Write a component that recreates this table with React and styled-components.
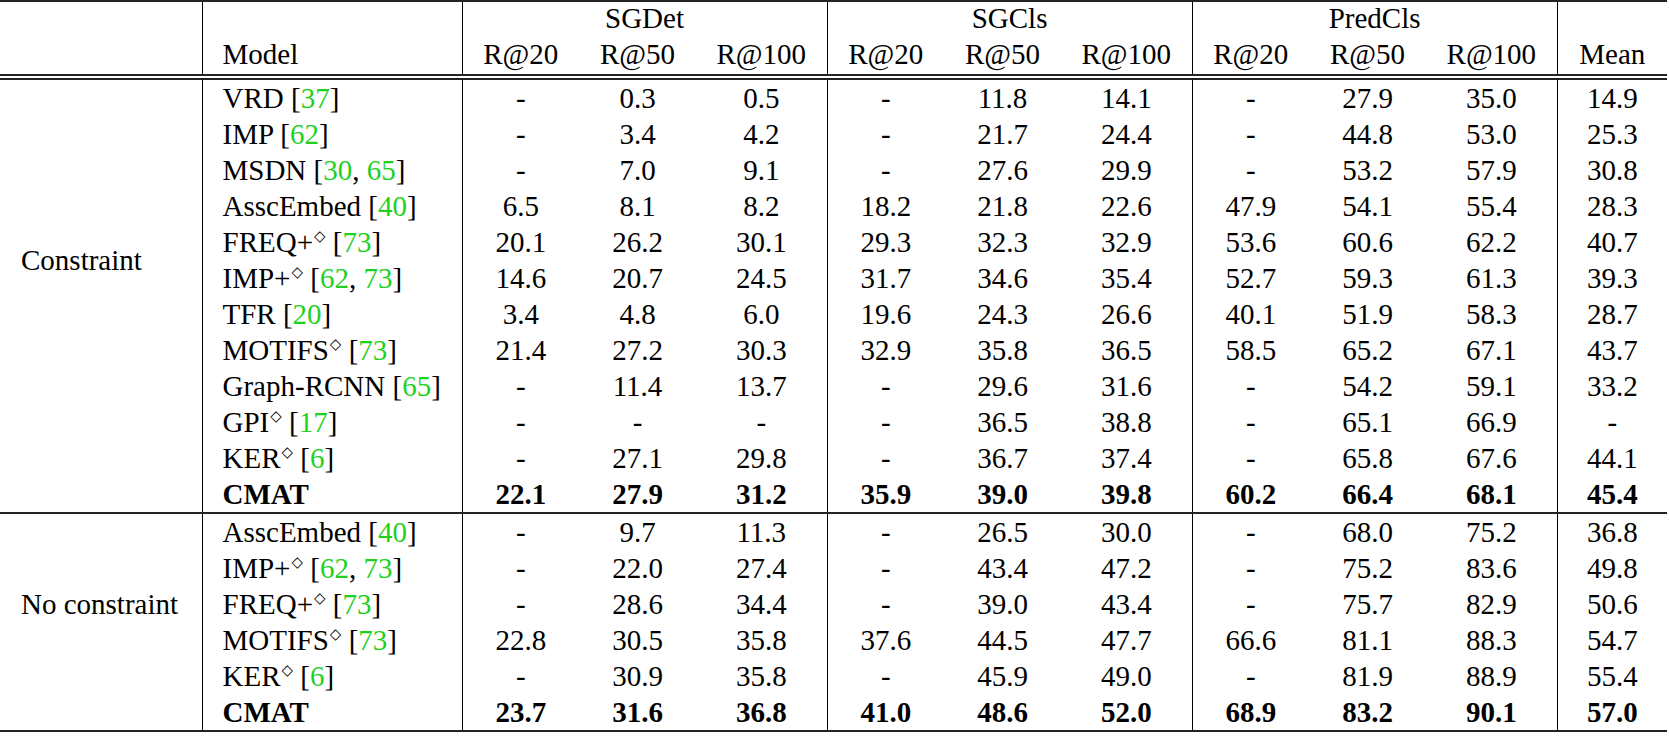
import React from 'react';
import styled, { createGlobalStyle } from 'styled-components';

const GlobalStyle = createGlobalStyle`
  body {
    margin: 0;
    background: #fff;
  }
`;

const Table = styled.table`
  border-collapse: collapse;
  table-layout: fixed;
  width: 1667px;
  font-family: "Liberation Serif", "Times New Roman", serif;
  font-size: 29px;
  color: #000;
  border-top: 2px solid #222;
  border-bottom: 2px solid #222;
`;

const Col = styled.col`
  width: ${p => p.$w}px;
`;

const HeadCell = styled.th`
  font-weight: normal;
  height: 36px;
  box-sizing: border-box;
  line-height: 32px;
  padding: 0 0 4px ${p => (p.$left ? '20px' : '0')};
  text-align: ${p => (p.$left ? 'left' : 'center')};
  white-space: nowrap;
  border-right: ${p => (p.$divider ? '1px solid #000' : 'none')};
  border-bottom: ${p => (p.$ruled ? '2px solid #222' : 'none')};
`;

const GapRow = styled.tr`
  height: 4px;

  td {
    padding: 0;
    border: none;
  }
`;

const BodyRow = styled.tr`
  height: 36px;
  font-weight: ${p => (p.$bold ? 'bold' : 'normal')};

  td {
    border-top: ${p => (p.$ruled ? '2px solid #222' : 'none')};
  }
`;

const GroupLabel = styled.td`
  padding: 0 0 0 21px;
  text-align: left;
  vertical-align: middle;
  white-space: nowrap;
  font-weight: normal;
  border-right: 1px solid #000;
`;

const ModelCell = styled.td`
  padding: 0 0 0 20px;
  line-height: 36px;
  text-align: left;
  white-space: nowrap;
  border-right: 1px solid #000;
`;

const NumCell = styled.td`
  padding: 0;
  line-height: 36px;
  text-align: center;
  white-space: nowrap;
  border-right: ${p => (p.$divider ? '1px solid #000' : 'none')};
`;

const Cite = styled.span`
  color: #1fd11f;
  font-weight: normal;
`;

const Diamond = styled.span`
  font-family: "DejaVu Sans", sans-serif;
  font-size: 15px;
  line-height: 1;
  vertical-align: 11px;
  margin-left: 1px;
`;

const constrained = [
  { name: 'VRD', cites: ['37'], v: ['-', '0.3', '0.5', '-', '11.8', '14.1', '-', '27.9', '35.0', '14.9'] },
  { name: 'IMP', cites: ['62'], v: ['-', '3.4', '4.2', '-', '21.7', '24.4', '-', '44.8', '53.0', '25.3'] },
  { name: 'MSDN', cites: ['30', '65'], v: ['-', '7.0', '9.1', '-', '27.6', '29.9', '-', '53.2', '57.9', '30.8'] },
  { name: 'AsscEmbed', cites: ['40'], v: ['6.5', '8.1', '8.2', '18.2', '21.8', '22.6', '47.9', '54.1', '55.4', '28.3'] },
  { name: 'FREQ+', sup: true, cites: ['73'], v: ['20.1', '26.2', '30.1', '29.3', '32.3', '32.9', '53.6', '60.6', '62.2', '40.7'] },
  { name: 'IMP+', sup: true, cites: ['62', '73'], v: ['14.6', '20.7', '24.5', '31.7', '34.6', '35.4', '52.7', '59.3', '61.3', '39.3'] },
  { name: 'TFR', cites: ['20'], v: ['3.4', '4.8', '6.0', '19.6', '24.3', '26.6', '40.1', '51.9', '58.3', '28.7'] },
  { name: 'MOTIFS', sup: true, cites: ['73'], v: ['21.4', '27.2', '30.3', '32.9', '35.8', '36.5', '58.5', '65.2', '67.1', '43.7'] },
  { name: 'Graph-RCNN', cites: ['65'], v: ['-', '11.4', '13.7', '-', '29.6', '31.6', '-', '54.2', '59.1', '33.2'] },
  { name: 'GPI', sup: true, cites: ['17'], v: ['-', '-', '-', '-', '36.5', '38.8', '-', '65.1', '66.9', '-'] },
  { name: 'KER', sup: true, cites: ['6'], v: ['-', '27.1', '29.8', '-', '36.7', '37.4', '-', '65.8', '67.6', '44.1'] },
  { name: 'CMAT', bold: true, v: ['22.1', '27.9', '31.2', '35.9', '39.0', '39.8', '60.2', '66.4', '68.1', '45.4'] },
];

const unconstrained = [
  { name: 'AsscEmbed', cites: ['40'], v: ['-', '9.7', '11.3', '-', '26.5', '30.0', '-', '68.0', '75.2', '36.8'] },
  { name: 'IMP+', sup: true, cites: ['62', '73'], v: ['-', '22.0', '27.4', '-', '43.4', '47.2', '-', '75.2', '83.6', '49.8'] },
  { name: 'FREQ+', sup: true, cites: ['73'], v: ['-', '28.6', '34.4', '-', '39.0', '43.4', '-', '75.7', '82.9', '50.6'] },
  { name: 'MOTIFS', sup: true, cites: ['73'], v: ['22.8', '30.5', '35.8', '37.6', '44.5', '47.7', '66.6', '81.1', '88.3', '54.7'] },
  { name: 'KER', sup: true, cites: ['6'], v: ['-', '30.9', '35.8', '-', '45.9', '49.0', '-', '81.9', '88.9', '55.4'] },
  { name: 'CMAT', bold: true, v: ['23.7', '31.6', '36.8', '41.0', '48.6', '52.0', '68.9', '83.2', '90.1', '57.0'] },
];

const groups = [
  { label: 'Constraint', span: 10, rows: constrained },
  { label: 'No constraint', span: 5, rows: unconstrained },
];

// dividers sit after the R@100 column of each setting
const dividerAt = [2, 5, 8];

const ModelName = ({ m }) => (
  <>
    {m.name}
    {m.sup && <Diamond>◇</Diamond>}
    {m.cites && (
      <>
        {' ['}
        {m.cites.map((c, i) => (
          <React.Fragment key={c}>
            {i > 0 && ', '}
            <Cite>{c}</Cite>
          </React.Fragment>
        ))}
        ]
      </>
    )}
  </>
);

const App = () => {
  const recall = ['R@20', 'R@50', 'R@100'];

  return (
    <>
      <GlobalStyle />
      <Table>
        <colgroup>
          <Col $w={202} />
          <Col $w={260} />
          {[0, 1, 2].map(g => (
            <React.Fragment key={g}>
              <Col $w={117} />
              <Col $w={117} />
              <Col $w={131} />
            </React.Fragment>
          ))}
          <Col $w={110} />
        </colgroup>
        <thead>
          <tr>
            <HeadCell $divider />
            <HeadCell $divider />
            <HeadCell colSpan={3} $divider>SGDet</HeadCell>
            <HeadCell colSpan={3} $divider>SGCls</HeadCell>
            <HeadCell colSpan={3} $divider>PredCls</HeadCell>
            <HeadCell />
          </tr>
          <tr>
            <HeadCell $divider $ruled />
            <HeadCell $divider $ruled $left>Model</HeadCell>
            {[0, 1, 2].map(g =>
              recall.map((r, i) => (
                <HeadCell key={`${g}-${r}`} $ruled $divider={i === 2}>
                  {r}
                </HeadCell>
              ))
            )}
            <HeadCell $ruled>Mean</HeadCell>
          </tr>
        </thead>
        <tbody>
          <GapRow>
            <td colSpan={11} />
          </GapRow>
          {groups.map(group =>
            group.rows.map((m, ri) => (
              <BodyRow key={`${group.label}-${ri}`} $bold={m.bold} $ruled={ri === 0}>
                {ri === 0 && <GroupLabel rowSpan={group.span}>{group.label}</GroupLabel>}
                {ri >= group.span && <GroupLabel />}
                <ModelCell>
                  <ModelName m={m} />
                </ModelCell>
                {m.v.map((val, ci) => (
                  <NumCell key={ci} $divider={dividerAt.includes(ci)}>
                    {val}
                  </NumCell>
                ))}
              </BodyRow>
            ))
          )}
        </tbody>
      </Table>
    </>
  );
};

export default App;
